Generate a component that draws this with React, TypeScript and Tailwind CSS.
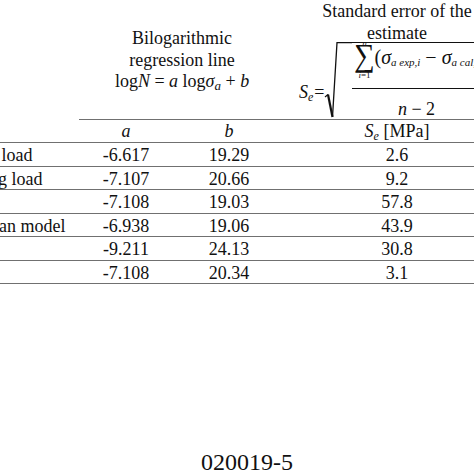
const rows = [
  { label: "Cyclic load", a: "-6.617", b: "19.29", se: "2.6" },
  { label: "Varying load", a: "-7.107", b: "20.66", se: "9.2" },
  { label: "Mixed", a: "-7.108", b: "19.03", se: "57.8" },
  { label: "Gaussian model", a: "-6.938", b: "19.06", se: "43.9" },
  { label: "Mean", a: "-9.211", b: "24.13", se: "30.8" },
  { label: "Total", a: "-7.108", b: "20.34", se: "3.1" },
];

const cols = "grid grid-cols-[129px_94px_112px_224px]";
const rule = "border-b-[1.5px] border-[#707070]";

function Formula() {
  return (
    <div className="flex items-start pl-[14px] -mt-[2px] h-[76px] whitespace-nowrap">
      <span className="mt-[41px] text-[18px] leading-[18px] italic">
        S<sub className="text-[12px]">e</sub>
        <span className="not-italic ml-[1px]">=</span>
      </span>
      <svg width="28" height="76" viewBox="0 0 28 76" className="shrink-0">
        <path d="M1 55 L4 52.5" stroke="#111" strokeWidth="1.1" fill="none" />
        <path d="M4 52.5 L8.5 75" stroke="#111" strokeWidth="2.2" fill="none" />
        <path d="M8.5 75 L13 0.7 L28 0.7" stroke="#111" strokeWidth="1.3" fill="none" />
      </svg>
      <div className="w-[128px] shrink-0 border-t-[1.3px] border-[#111]">
        <div className="flex items-start h-[44.5px]">
          <div className="ml-[3px] w-[18px] flex flex-col items-center">
            <span className="text-[9px] leading-[9px] italic -mt-[4px]">n</span>
            <span className="inline-block -mt-[2px] h-[25px] text-[29px] leading-[25px] -translate-y-[3px] scale-y-[1.1]">
              ∑
            </span>
            <span className="text-[9px] leading-[9px]">
              <i>i</i>=1
            </span>
          </div>
          <span className="mt-[3.5px] ml-[1px] text-[20px] leading-[20px]">
            (<i>σ</i>
            <sub className="text-[11px] italic">a exp,i</sub> − <i>σ</i>
            <sub className="text-[11px] italic">a cal,i</sub>)<sup className="text-[11px]">2</sup>
          </span>
        </div>
        <div className="border-t-[1px] border-[#111] pt-[11px] text-center text-[18px] leading-[18px]">
          <i>n</i> − 2
        </div>
      </div>
    </div>
  );
}

export default function App() {
  return (
    <div className="relative w-[474px] h-[474px] overflow-hidden bg-white text-[#111] font-['Liberation_Serif',serif] text-[18px]">
      <div className="-ml-[50px] w-[559px]">
        <div className={`${cols} h-[119.5px]`}>
          <div />
          <div className={`col-span-2 ${rule} pt-[28px] text-center leading-[21.5px]`}>
            Bilogarithmic
            <br />
            regression line
            <br />
            log<i>N</i> = <i>a</i> log<i>σ</i>
            <sub className="text-[13px] italic">a</sub> + <i>b</i>
          </div>
          <div className={`${rule} text-center leading-[22px]`}>
            <div className="whitespace-nowrap">
              Standard error of the
              <br />
              estimate
            </div>
            <Formula />
          </div>
        </div>

        <div className={`${cols} h-[23.5px] ${rule} leading-[22px] text-center`}>
          <div />
          <div className="italic">a</div>
          <div className="italic">b</div>
          <div>
            <i>S</i>
            <sub className="text-[12px] italic">e</sub> [MPa]
          </div>
        </div>

        {rows.map((r) => (
          <div key={r.label} className={`${cols} h-[23.5px] ${rule} leading-[24px]`}>
            <div className="whitespace-nowrap">{r.label}</div>
            <div className="text-center">{r.a}</div>
            <div className="text-center">{r.b}</div>
            <div className="text-center">{r.se}</div>
          </div>
        ))}
      </div>

      <div className="mt-[166px] pl-[20px] text-center text-[24px] leading-[24px]">020019-5</div>
    </div>
  );
}
